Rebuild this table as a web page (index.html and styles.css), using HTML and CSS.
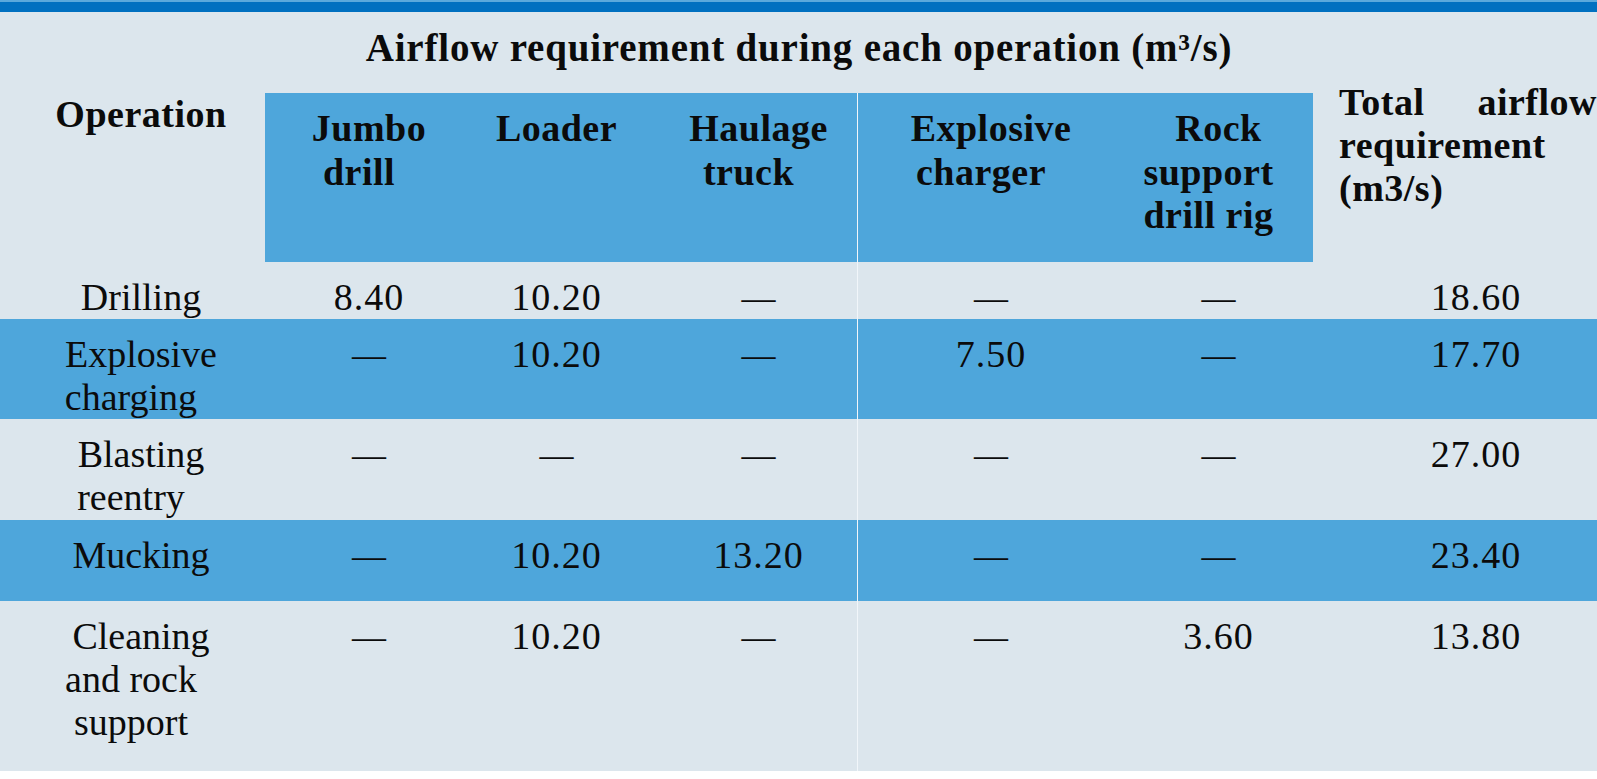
FILE: index.html
```html
<!DOCTYPE html>
<html lang="en">
<head>
<meta charset="utf-8">
<title>Airflow requirement during each operation</title>
<link rel="stylesheet" href="styles.css">
</head>
<body>
<div class="page">
  <div class="sheet">
    <div class="grid head">
      <div class="cell op op-head">Operation</div>
      <div class="cell title">Airflow requirement during each operation (m³/s)</div>
      <div class="cell eq">Jumbo<br>drill</div>
      <div class="cell eq">Loader</div>
      <div class="cell eq">Haulage<br>truck</div>
      <div class="cell eq sep">Explosive<br>charger</div>
      <div class="cell eq">Rock<br>support<br>drill rig</div>
      <div class="cell total-head">Total airflow requirement (m3/s)</div>
    </div>

    <div class="grid row">
      <div class="cell op">Drilling</div>
      <div class="cell num">8.40</div>
      <div class="cell num">10.20</div>
      <div class="cell dash">—</div>
      <div class="cell dash sep">—</div>
      <div class="cell dash">—</div>
      <div class="cell num">18.60</div>
    </div>

    <div class="grid row blue">
      <div class="cell op">Explosive<br>charging</div>
      <div class="cell dash">—</div>
      <div class="cell num">10.20</div>
      <div class="cell dash">—</div>
      <div class="cell num sep">7.50</div>
      <div class="cell dash">—</div>
      <div class="cell num">17.70</div>
    </div>

    <div class="grid row row-blast">
      <div class="cell op">Blasting<br>reentry</div>
      <div class="cell dash">—</div>
      <div class="cell dash">—</div>
      <div class="cell dash">—</div>
      <div class="cell dash sep">—</div>
      <div class="cell dash">—</div>
      <div class="cell num">27.00</div>
    </div>

    <div class="grid row blue row-muck">
      <div class="cell op">Mucking</div>
      <div class="cell dash">—</div>
      <div class="cell num">10.20</div>
      <div class="cell num">13.20</div>
      <div class="cell dash sep">—</div>
      <div class="cell dash">—</div>
      <div class="cell num">23.40</div>
    </div>

    <div class="grid row row-clean">
      <div class="cell op">Cleaning<br>and rock<br>support</div>
      <div class="cell dash">—</div>
      <div class="cell num">10.20</div>
      <div class="cell dash">—</div>
      <div class="cell dash sep">—</div>
      <div class="cell num">3.60</div>
      <div class="cell num">13.80</div>
    </div>
  </div>
</div>
</body>
</html>
```

FILE: styles.css
```css
html, body {
  margin: 0;
  padding: 0;
  overflow: hidden;
  background: #ffffff;
}

body {
  font-family: "Liberation Serif", "Times New Roman", serif;
  font-size: 38px;
  line-height: 43px;
  color: #0b0b0b;
}

.page {
  border-top: 2px solid #5aa9dc;
}

.sheet {
  width: 1619px;
  border-top: 10px solid #0070c0;
  background: #dce6ed;
}

.grid {
  display: grid;
  grid-template-columns: 265px 188px 187px 217px 247px 209px 306px;
}

.head {
  grid-template-rows: 81px 169px;
}

.cell {
  text-align: center;
  text-indent: 20px;
}

.op {
  padding-right: 3px;
}

.op-head {
  grid-column: 1;
  grid-row: 1 / 3;
  font-weight: bold;
  letter-spacing: 0.5px;
  padding-top: 81px;
}

.title {
  grid-column: 2 / 7;
  grid-row: 1;
  font-weight: bold;
  font-size: 39px;
  letter-spacing: 0.8px;
  padding-top: 14px;
}

.eq {
  grid-row: 2;
  background: #4ea6db;
  font-weight: bold;
  letter-spacing: 0.5px;
  padding-top: 14px;
  line-height: 43.5px;
}

.total-head {
  grid-column: 7;
  grid-row: 1 / 3;
  font-weight: bold;
  letter-spacing: 0.5px;
  text-align: justify;
  text-indent: 0;
  padding: 69px 22px 0 26px;
}

.sep {
  border-left: 1px solid #f1f6fa;
}

.row > .cell {
  padding-top: 14px;
}

.row.blue {
  background: #4ea6db;
}

.row-blast > .cell {
  padding-bottom: 1px;
}

.row-muck > .cell {
  padding-bottom: 24px;
}

.row-clean > .cell {
  padding-bottom: 27px;
}

.num {
  letter-spacing: 1px;
}

.dash {
  font-size: 34px;
}
```
